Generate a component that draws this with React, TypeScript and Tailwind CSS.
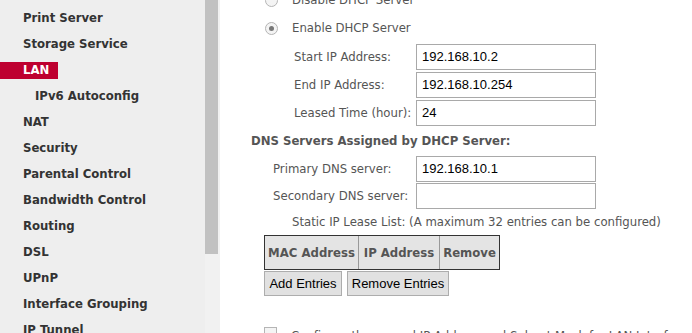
import React from "react";

const menu = [
  { label: "Print Server" },
  { label: "Storage Service" },
  { label: "LAN", active: true },
  { label: "IPv6 Autoconfig", sub: true },
  { label: "NAT" },
  { label: "Security" },
  { label: "Parental Control" },
  { label: "Bandwidth Control" },
  { label: "Routing" },
  { label: "DSL" },
  { label: "UPnP" },
  { label: "Interface Grouping" },
  { label: "IP Tunnel" },
];

const tah = { fontFamily: '"DejaVu Sans Condensed", "DejaVu Sans", sans-serif' };

function Field({ label, value, labelW }: { label: string; value: string; labelW: string }) {
  return (
    <div className="flex items-center h-[26px] shrink-0">
      <div className={`${labelW} text-[13px] text-[#555]`}>{label}</div>
      <div className="w-[180px] h-[26px] border border-[#a9a9a9] bg-white flex items-center px-[5px] text-[13px] text-black font-['Liberation_Sans',sans-serif]">
        {value}
      </div>
    </div>
  );
}

export default function App() {
  return (
    <div className="w-[692px] h-[333px] overflow-hidden flex items-start bg-white" style={tah}>
      <div className="w-[205px] h-[333px] shrink-0 bg-[#eeeeee] flex flex-col pt-[5px] overflow-hidden">
        {menu.map((m) => (
          <div key={m.label} className="h-[26px] shrink-0 flex items-center">
            {m.active ? (
              <div className="h-[17px] w-[58px] bg-[#be0030] text-white font-bold text-[13px] pl-[23px] flex items-center">
                {m.label}
              </div>
            ) : (
              <div className={`${m.sub ? "pl-[35px]" : "pl-[23px]"} font-bold text-[13px] text-[#333] whitespace-nowrap`}>{m.label}</div>
            )}
          </div>
        ))}
      </div>
      <div className="w-[15px] h-[333px] shrink-0 bg-[#f1f1f1] flex flex-col">
        <div className="w-[13px] h-[254px] shrink-0 bg-[#c1c1c1]"></div>
      </div>
      <div className="flex-1 h-[333px] overflow-hidden flex flex-col pl-[44px]">
        <div className="flex items-center h-[26px] shrink-0 mt-[-13px]">
          <div className="w-[13px] h-[13px] rounded-full border border-[#b5b5b5] bg-[#f4f4f4] ml-[1px]"></div>
          <div className="ml-[14px] text-[13px] text-[#555]">Disable DHCP Server</div>
        </div>
        <div className="flex items-center h-[26px] shrink-0 mt-[2px]">
          <div className="w-[13px] h-[13px] rounded-full border border-[#b5b5b5] bg-[#f4f4f4] ml-[1px] flex items-center justify-center">
            <div className="w-[5px] h-[5px] rounded-full bg-[#777]"></div>
          </div>
          <div className="ml-[14px] text-[13px] text-[#555]">Enable DHCP Server</div>
        </div>
        <div className="flex flex-col gap-[2px] mt-[3px] pl-[30px] shrink-0">
          <Field label="Start IP Address:" value="192.168.10.2" labelW="w-[122px]" />
          <Field label="End IP Address:" value="192.168.10.254" labelW="w-[122px]" />
          <Field label="Leased Time (hour):" value="24" labelW="w-[122px]" />
        </div>
        <div className="h-[30px] shrink-0 flex items-center ml-[-13px] font-bold text-[13px] text-[#555]">
          DNS Servers Assigned by DHCP Server:
        </div>
        <div className="flex flex-col gap-[1px] pl-[9px] shrink-0">
          <Field label="Primary DNS server:" value="192.168.10.1" labelW="w-[143px]" />
          <Field label="Secondary DNS server:" value="" labelW="w-[143px]" />
        </div>
        <div className="h-[26px] shrink-0 flex items-center pl-[28px] text-[13px] text-[#555] whitespace-nowrap">
          Static IP Lease List: (A maximum 32 entries can be configured)
        </div>
        <div className="flex shrink-0">
          <div className="flex border border-[#333] bg-[#e4e4e4] h-[35px] font-bold text-[13px] text-[#555]">
            <div className="w-[94px] flex items-center justify-center border-r border-[#999]">MAC Address</div>
            <div className="w-[81px] flex items-center justify-center border-r border-[#999]">IP Address</div>
            <div className="w-[59px] flex items-center justify-center">Remove</div>
          </div>
        </div>
        <div className="flex gap-[5px] mt-[1px] shrink-0 font-['Liberation_Sans',sans-serif] text-[13px] text-black">
          <div className="h-[25px] w-[78px] border border-[#adadad] bg-[#e1e1e1] flex items-center justify-center">Add Entries</div>
          <div className="h-[25px] w-[102px] border border-[#adadad] bg-[#e1e1e1] flex items-center justify-center">Remove Entries</div>
        </div>
        <div className="flex items-start mt-[31px] h-[20px] shrink-0">
          <div className="w-[13px] h-[13px] border border-[#b5b5b5] bg-[#f4f4f4]"></div>
          <div className="ml-[14px] mt-[-1px] text-[13px] text-[#555] whitespace-nowrap">Configure the second IP Address and Subnet Mask for LAN Interface</div>
        </div>
      </div>
    </div>
  );
}
